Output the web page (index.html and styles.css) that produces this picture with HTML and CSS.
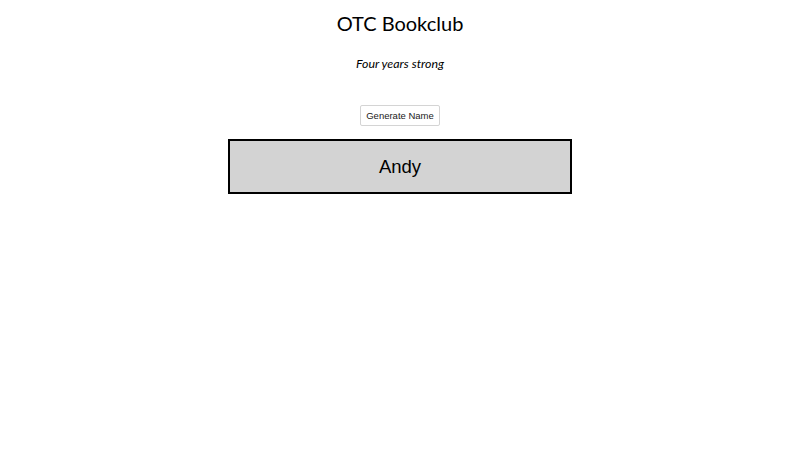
FILE: index.html
```html
<!DOCTYPE html>
<html>
<head>
<meta charset="utf-8">
<link rel="stylesheet" href="styles.css">
</head>
<body>
<header class="head">
  <h1 class="title">OTC Bookclub</h1>
  <p class="tagline">Four years strong</p>
</header>
<main class="main">
  <button class="gen">Generate Name</button>
  <div class="namebox">Andy</div>
</main>
</body>
</html>
```

FILE: styles.css
```css
html, body {
  margin: 0;
  padding: 0;
  background: #fff;
}
body {
  font-family: "Lato", "Open Sans", sans-serif;
  color: #000;
}
.head {
  display: flex;
  flex-direction: column;
  align-items: center;
  padding-top: 8px;
}
.title {
  margin: 0;
  font-size: 20px;
  font-weight: 400;
  line-height: 30px;
}
.tagline {
  margin: 16px 0 0;
  font-size: 12.4px;
  font-style: italic;
  line-height: 19px;
}
.main {
  display: flex;
  flex-direction: column;
  align-items: center;
  padding-top: 32px;
}
.gen {
  font-family: "Liberation Sans", Arial, sans-serif;
  font-size: 9.5px;
  color: #222;
  background: #fff;
  border: 1px solid #d4d4d4;
  border-radius: 2px;
  height: 21px;
  padding: 0 5px;
}
.namebox {
  margin-top: 13px;
  width: 340px;
  height: 51px;
  border: 2px solid #000;
  background: #d3d3d3;
  display: flex;
  align-items: center;
  justify-content: center;
  font-family: "Liberation Sans", Arial, sans-serif;
  font-size: 18.5px;
}
```
